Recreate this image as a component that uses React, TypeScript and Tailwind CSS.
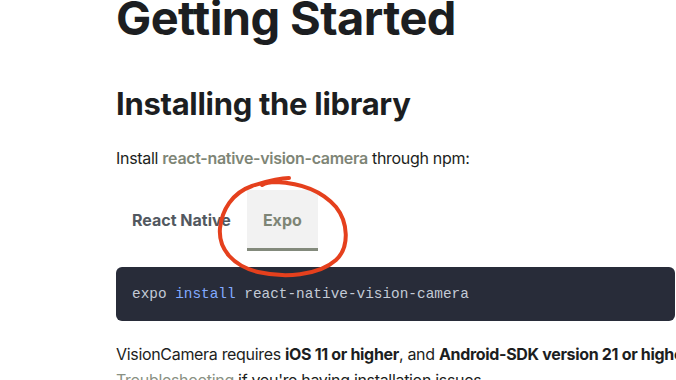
export default function App() {
  return (
    <div className="relative h-[380px] w-[676px] overflow-hidden bg-white font-['Inter','Liberation_Sans',sans-serif] text-[#1c1e21]">
      <main className="ml-[116px] mt-[-12px] w-[559px]">
        <h1 className="text-[47px] font-bold leading-[60px] tracking-[-0.6px]">Getting Started</h1>

        <h2 className="mt-[36px] text-[31px] font-bold leading-[40px] tracking-[-0.3px]">
          Installing the library
        </h2>

        <p className="mt-[21px] text-[16px] leading-[26px] tracking-[-0.3px]">
          Install{" "}
          <a className="font-semibold text-[#7e8576]">react-native-vision-camera</a> through npm:
        </p>

        {/* tabs */}
        <ul className="mt-[19px] flex text-[16px] font-bold leading-[24px]">
          <li className="px-4 pb-[19px] pt-[18px] text-[#525860]">React Native</li>
          <li className="border-b-[3px] border-[#838a7c] bg-[#f2f2f2] px-4 pb-[16px] pt-[18px] text-[#7e8576]">
            Expo
          </li>
        </ul>

        <pre className="mt-[16px] rounded-md bg-[#282c39] px-4 py-4 font-['DejaVu_Sans_Mono','Liberation_Mono',monospace] text-[14.4px] leading-[21px] text-[#c3cad6]">
          <code>
            expo <span className="text-[#82aaff]">install</span> react-native-vision-camera
          </code>
        </pre>

        <p className="mt-[20px] whitespace-nowrap text-[16px] leading-[26px] tracking-[-0.32px]">
          VisionCamera requires <strong>iOS 11 or higher</strong>, and{" "}
          <strong>Android-SDK version 21 or higher</strong>. See
          <br />
          <a className="text-[#8a9183]">Troubleshooting</a> if you're having installation issues.
        </p>
      </main>

      {/* hand-drawn annotation */}
      <svg className="pointer-events-none absolute inset-0" width="676" height="380" viewBox="0 0 676 380" fill="none">
        <path
          d="M 289 178 C 276 178 262 183 252 186 C 232 193 222 210 220 228 C 218 250 234 266 258 272 C 284 278 318 276 336 260 C 350 247 348 222 336 207 C 322 191 300 183 276 182 C 270 182 265 183 262 185"
          stroke="#e5401d"
          strokeWidth="4"
          strokeLinecap="round"
        />
      </svg>
    </div>
  );
}
